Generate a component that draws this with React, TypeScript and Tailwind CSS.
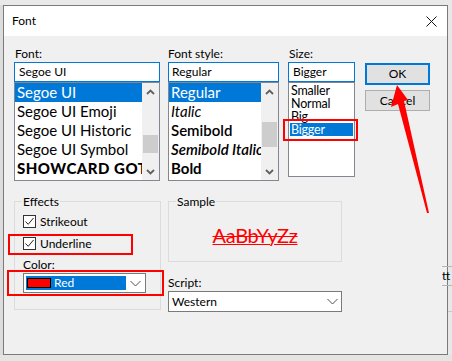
import type { ReactNode } from "react";

const ui = "[font-family:'Lato','Noto_Sans',sans-serif]";

function Chevron({ up }: { up?: boolean }) {
  return (
    <svg width="9" height="6" viewBox="0 0 9 6" className="text-[#606060]">
      <path
        d={up ? "M1 5 L4.5 1.5 L8 5" : "M1 1 L4.5 4.5 L8 1"}
        fill="none"
        stroke="currentColor"
        strokeWidth="1.8"
      />
    </svg>
  );
}

function ComboChevron() {
  return (
    <svg width="11" height="7" viewBox="0 0 11 7" className="text-[#505050]">
      <path d="M0.5 1 L5.5 6 L10.5 1" fill="none" stroke="currentColor" strokeWidth="1" />
    </svg>
  );
}

function Scrollbar({ thumbTop, thumbH }: { thumbTop: number; thumbH: number }) {
  return (
    <div className="w-[17px] shrink-0 bg-[#f0f0f0] flex flex-col">
      <div className="h-[17px] flex items-center justify-center">
        <Chevron up />
      </div>
      <div className="flex-1 flex flex-col">
        <div style={{ height: thumbTop }} />
        <div className="mx-[1px] bg-[#cdcdcd]" style={{ height: thumbH }} />
      </div>
      <div className="h-[17px] flex items-center justify-center">
        <Chevron />
      </div>
    </div>
  );
}

function Item({ sel, className, children }: { sel?: boolean; className?: string; children: ReactNode }) {
  return (
    <div
      className={`h-[19px] leading-[19px] text-[15px] pl-[2px] whitespace-nowrap overflow-hidden ${
        sel ? "bg-[#0078d7] text-white" : "text-black"
      } ${className ?? ""}`}
    >
      {children}
    </div>
  );
}

function Check({ label }: { label: string }) {
  return (
    <div className="h-[15px] flex items-center gap-[4px]">
      <div className="w-[13px] h-[13px] border border-[#333] bg-white flex items-center justify-center">
        <svg width="11" height="11" viewBox="0 0 11 11">
          <path d="M1.5 5.5 L4.2 8.3 L9.5 2" fill="none" stroke="#222" strokeWidth="1" />
        </svg>
      </div>
      <span className="text-[12px] leading-[15px]">{label}</span>
    </div>
  );
}

export default function App() {
  return (
    <div className={`relative w-[452px] h-[361px] overflow-hidden bg-[#e4e4e4] ${ui} text-black`}>
      <div className="h-[5px] bg-[#e9e9e9]" />
      <div className="flex h-[350px]">
        <div className="w-[3px] bg-[#dcdcdc]" />
        <div className="w-[445px] border border-[#7a7a7a] flex flex-col">
          {/* title bar */}
          <div className="h-[30px] shrink-0 bg-white flex items-center justify-between pl-[8px] pr-[10px]">
            <span className="text-[12px]">Font</span>
            <svg width="11" height="11" viewBox="0 0 11 11">
              <path d="M0.5 0.5 L10.5 10.5 M10.5 0.5 L0.5 10.5" stroke="#111" strokeWidth="1" />
            </svg>
          </div>

          {/* body */}
          <div className="flex-1 bg-[#f0f0f0] pl-[10px] pt-[10px]">
            <div className="flex items-start">
              {/* Font */}
              <div className="w-[146px]">
                <div className="h-[16px] leading-[16px] text-[12px] pl-[1px]">Font:</div>
                <div className="h-[20px] border border-[#0078d7] bg-white text-[12px] leading-[18px] pl-[4px]">
                  Segoe UI
                </div>
                <div className="h-[99px] border border-[#828790] bg-white flex">
                  <div className="flex-1 min-w-0 overflow-hidden">
                    <Item sel>Segoe UI</Item>
                    <Item>Segoe UI Emoji</Item>
                    <Item>Segoe UI Historic</Item>
                    <Item>Segoe UI Symbol</Item>
                    <Item className="font-black uppercase tracking-[0.5px] text-[14px]">Showcard Gothic</Item>
                  </div>
                  <Scrollbar thumbTop={35} thumbH={18} />
                </div>
              </div>

              {/* Font style */}
              <div className="w-[111px] ml-[8px]">
                <div className="h-[16px] leading-[16px] text-[12px]">Font style:</div>
                <div className="h-[20px] border border-[#0078d7] bg-white text-[12px] leading-[18px] pl-[3px]">
                  Regular
                </div>
                <div className="h-[99px] border border-[#828790] bg-white flex">
                  <div className="flex-1 min-w-0 overflow-hidden">
                    <Item sel>Regular</Item>
                    <Item className="italic">Italic</Item>
                    <Item className="font-semibold">Semibold</Item>
                    <Item className="font-semibold italic">Semibold Italic</Item>
                    <Item className="font-bold">Bold</Item>
                  </div>
                  <Scrollbar thumbTop={22} thumbH={25} />
                </div>
              </div>

              {/* Size */}
              <div className="w-[67px] ml-[9px]">
                <div className="h-[16px] leading-[16px] text-[12px] pl-[1px]">Size:</div>
                <div className="h-[20px] border border-[#0078d7] bg-white text-[12px] leading-[18px] pl-[4px]">
                  Bigger
                </div>
                <div className="h-[95px] border border-[#828790] bg-white pt-[1px] px-[1px] text-[12.5px] leading-[13px] tracking-[-0.2px]">
                  <div className="h-[13px] pl-[1px]">Smaller</div>
                  <div className="h-[13px] pl-[1px]">Normal</div>
                  <div className="h-[13px] pl-[1px]">Big</div>
                  <div className="h-[13px] pl-[1px] bg-[#0078d7] text-white">Bigger</div>
                </div>
              </div>

              {/* Buttons */}
              <div className="w-[65px] ml-[10px] pt-[17px] flex flex-col">
                <div className="h-[22px] border-2 border-[#0078d7] bg-[#e1e1e1] flex items-center justify-center text-[12px]">
                  OK
                </div>
                <div className="h-[21px] mt-[5px] border border-[#adadad] bg-[#e1e1e1] flex items-center justify-center text-[12px]">
                  Cancel
                </div>
              </div>
            </div>

            <div className="flex items-start mt-[13px]">
              {/* Effects */}
              <fieldset className="w-[147px] h-[116px] border border-[#dcdcdc] pl-[8px]">
                <legend className="-ml-[1px] px-[1px] text-[12px] leading-[15px]">Effects</legend>
                <div className="mt-[5px]">
                  <Check label="Strikeout" />
                </div>
                <div className="mt-[7px]">
                  <Check label="Underline" />
                </div>
                <div className="mt-[6px] h-[15px] leading-[15px] text-[12px]">Color:</div>
                <div className="mt-[1px] w-[123px] h-[20px] border border-[#7a7a7a] bg-white flex items-center pl-[2px] pr-[4px]">
                  <div className="w-[100px] h-[14px] bg-[#0078d7] flex items-center pl-[1px] gap-[3px]">
                    <div className="w-[24px] h-[10px] bg-[#ff0000] border border-black" />
                    <span className="text-white text-[12px] leading-[14px]">Red</span>
                  </div>
                  <div className="flex-1 flex justify-end">
                    <ComboChevron />
                  </div>
                </div>
              </fieldset>

              {/* Sample + Script */}
              <div className="w-[174px] ml-[7px]">
                <fieldset className="h-[68px] border border-[#dcdcdc] flex items-center justify-center">
                  <legend className="ml-[7px] px-[1px] text-[12px] leading-[15px]">Sample</legend>
                  <div className="h-[50px] flex items-center justify-center">
                    <span className="text-[#ff0000] text-[20px] tracking-[-0.3px] [text-decoration-line:underline_line-through] [text-decoration-thickness:1px]">
                      AaBbYyZz
                    </span>
                  </div>
                </fieldset>
                <div className="mt-[13px] h-[16px] leading-[16px] text-[12px]">Script:</div>
                <div className="h-[21px] border border-[#7a7a7a] bg-white flex items-center justify-between pl-[3px] pr-[3px] text-[12px]">
                  <span>Western</span>
                  <ComboChevron />
                </div>
              </div>
            </div>
          </div>
        </div>
        <div className="flex-1 bg-[#e8e8e8] flex flex-col">
          <div className="h-[261px]" />
          <div className="h-[20px] border-y border-[#b5b5b5] text-[12px] leading-[18px] -ml-[6px] overflow-hidden">tt</div>
          <div className="h-[26px] border-b border-[#c8c8c8]" />
        </div>
      </div>
      <div className="h-[6px] bg-[#e4e4e4]" />

      {/* red annotations */}
      <div className="absolute left-[283px] top-[119px] w-[75px] h-[22px] border-2 border-[#ff0000]" />
      <div className="absolute left-[8px] top-[234px] w-[125px] h-[21px] border-2 border-[#ff0000]" />
      <div className="absolute left-[7px] top-[270px] w-[157px] h-[26px] border-2 border-[#ff0000]" />
      <svg className="absolute left-0 top-0" width="452" height="361" viewBox="0 0 452 361">
        <polygon points="397,85 391,107 398,104 427,213 429,213 404,101 408,100" fill="#ff0000" />
      </svg>
    </div>
  );
}
